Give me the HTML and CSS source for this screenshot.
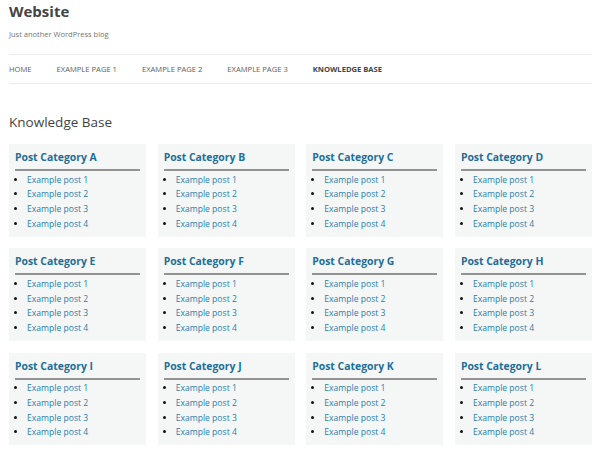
FILE: index.html
```html
<!DOCTYPE html>
<html lang="en">
<head>
  <meta charset="UTF-8">
  <meta name="viewport" content="width=device-width, initial-scale=1">
  <title>Knowledge Base | Website</title>
  <link rel="stylesheet" href="styles.css">
</head>
<body>

  <div class="site">
    <header class="site-header">
      <h1 class="site-title">Website</h1>
      <p class="site-description">Just another WordPress blog</p>
    </header>

    <nav class="main-nav">
      <ul>
        <li><a href="#">Home</a></li>
        <li><a href="#">Example Page 1</a></li>
        <li><a href="#">Example Page 2</a></li>
        <li><a href="#">Example Page 3</a></li>
        <li class="current"><a href="#">Knowledge Base</a></li>
      </ul>
    </nav>

    <h2 class="page-title">Knowledge Base</h2>

    <div class="kb-grid">
      <div class="kb-card">
        <h3><a href="#">Post Category A</a></h3>
        <ul>
          <li><a href="#">Example post 1</a></li>
          <li><a href="#">Example post 2</a></li>
          <li><a href="#">Example post 3</a></li>
          <li><a href="#">Example post 4</a></li>
        </ul>
      </div>
      <div class="kb-card">
        <h3><a href="#">Post Category B</a></h3>
        <ul>
          <li><a href="#">Example post 1</a></li>
          <li><a href="#">Example post 2</a></li>
          <li><a href="#">Example post 3</a></li>
          <li><a href="#">Example post 4</a></li>
        </ul>
      </div>
      <div class="kb-card">
        <h3><a href="#">Post Category C</a></h3>
        <ul>
          <li><a href="#">Example post 1</a></li>
          <li><a href="#">Example post 2</a></li>
          <li><a href="#">Example post 3</a></li>
          <li><a href="#">Example post 4</a></li>
        </ul>
      </div>
      <div class="kb-card">
        <h3><a href="#">Post Category D</a></h3>
        <ul>
          <li><a href="#">Example post 1</a></li>
          <li><a href="#">Example post 2</a></li>
          <li><a href="#">Example post 3</a></li>
          <li><a href="#">Example post 4</a></li>
        </ul>
      </div>
      <div class="kb-card">
        <h3><a href="#">Post Category E</a></h3>
        <ul>
          <li><a href="#">Example post 1</a></li>
          <li><a href="#">Example post 2</a></li>
          <li><a href="#">Example post 3</a></li>
          <li><a href="#">Example post 4</a></li>
        </ul>
      </div>
      <div class="kb-card">
        <h3><a href="#">Post Category F</a></h3>
        <ul>
          <li><a href="#">Example post 1</a></li>
          <li><a href="#">Example post 2</a></li>
          <li><a href="#">Example post 3</a></li>
          <li><a href="#">Example post 4</a></li>
        </ul>
      </div>
      <div class="kb-card">
        <h3><a href="#">Post Category G</a></h3>
        <ul>
          <li><a href="#">Example post 1</a></li>
          <li><a href="#">Example post 2</a></li>
          <li><a href="#">Example post 3</a></li>
          <li><a href="#">Example post 4</a></li>
        </ul>
      </div>
      <div class="kb-card">
        <h3><a href="#">Post Category H</a></h3>
        <ul>
          <li><a href="#">Example post 1</a></li>
          <li><a href="#">Example post 2</a></li>
          <li><a href="#">Example post 3</a></li>
          <li><a href="#">Example post 4</a></li>
        </ul>
      </div>
      <div class="kb-card">
        <h3><a href="#">Post Category I</a></h3>
        <ul>
          <li><a href="#">Example post 1</a></li>
          <li><a href="#">Example post 2</a></li>
          <li><a href="#">Example post 3</a></li>
          <li><a href="#">Example post 4</a></li>
        </ul>
      </div>
      <div class="kb-card">
        <h3><a href="#">Post Category J</a></h3>
        <ul>
          <li><a href="#">Example post 1</a></li>
          <li><a href="#">Example post 2</a></li>
          <li><a href="#">Example post 3</a></li>
          <li><a href="#">Example post 4</a></li>
        </ul>
      </div>
      <div class="kb-card">
        <h3><a href="#">Post Category K</a></h3>
        <ul>
          <li><a href="#">Example post 1</a></li>
          <li><a href="#">Example post 2</a></li>
          <li><a href="#">Example post 3</a></li>
          <li><a href="#">Example post 4</a></li>
        </ul>
      </div>
      <div class="kb-card">
        <h3><a href="#">Post Category L</a></h3>
        <ul>
          <li><a href="#">Example post 1</a></li>
          <li><a href="#">Example post 2</a></li>
          <li><a href="#">Example post 3</a></li>
          <li><a href="#">Example post 4</a></li>
        </ul>
      </div>
    </div>
  </div>

</body>
</html>
```

FILE: styles.css
```css
body {
  font-family: 'Open Sans', 'Liberation Sans', Arial, sans-serif;
  background-color: #fff;
  margin: 0;
  padding: 0;
  color: #444;
}

a {
  text-decoration: none;
}

.site {
  padding: 0 8px 0 9px;
}

/* Header */
.site-header {
  padding-top: 1px;
}

.site-title {
  margin: 0;
  font-size: 15px;
  line-height: 20px;
  font-weight: 700;
  color: #444;
}

.site-description {
  margin: 7px 0 0;
  font-size: 7.5px;
  line-height: 12px;
  color: #757575;
}

/* Navigation */
.main-nav {
  margin-top: 14px;
  border-top: 1px solid #ededed;
  border-bottom: 1px solid #ededed;
}

.main-nav ul {
  display: flex;
  margin: 0;
  padding: 0;
  list-style: none;
}

.main-nav li {
  margin-right: 25px;
}

.main-nav a {
  display: block;
  font-size: 7.6px;
  line-height: 28px;
  text-transform: uppercase;
  color: #5e5e5e;
}

.main-nav .current a {
  font-weight: 700;
  color: #444;
}

/* Page title */
.page-title {
  margin: 28px 0 12px;
  font-size: 13.5px;
  line-height: 20px;
  font-weight: 400;
  color: #444;
}

/* Knowledge base grid */
.kb-grid {
  display: grid;
  grid-template-columns: repeat(4, 1fr);
  gap: 11.5px;
}

.kb-card {
  background-color: #f5f7f7;
  padding: 6px 6px 5.5px;
}

.kb-card h3 {
  margin: 0;
  padding-bottom: 5px;
  border-bottom: 2px solid #939393;
  font-size: 10.4px;
  line-height: 14px;
  font-weight: 700;
}

.kb-card h3 a {
  color: #1e6e98;
}

.kb-card ul {
  margin: 1.5px 0 0;
  padding-left: 12px;
  list-style: disc;
  color: #111;
  font-size: 8.6px;
  line-height: 14.7px;
}

.kb-card li a {
  color: #2b7eac;
}
```
